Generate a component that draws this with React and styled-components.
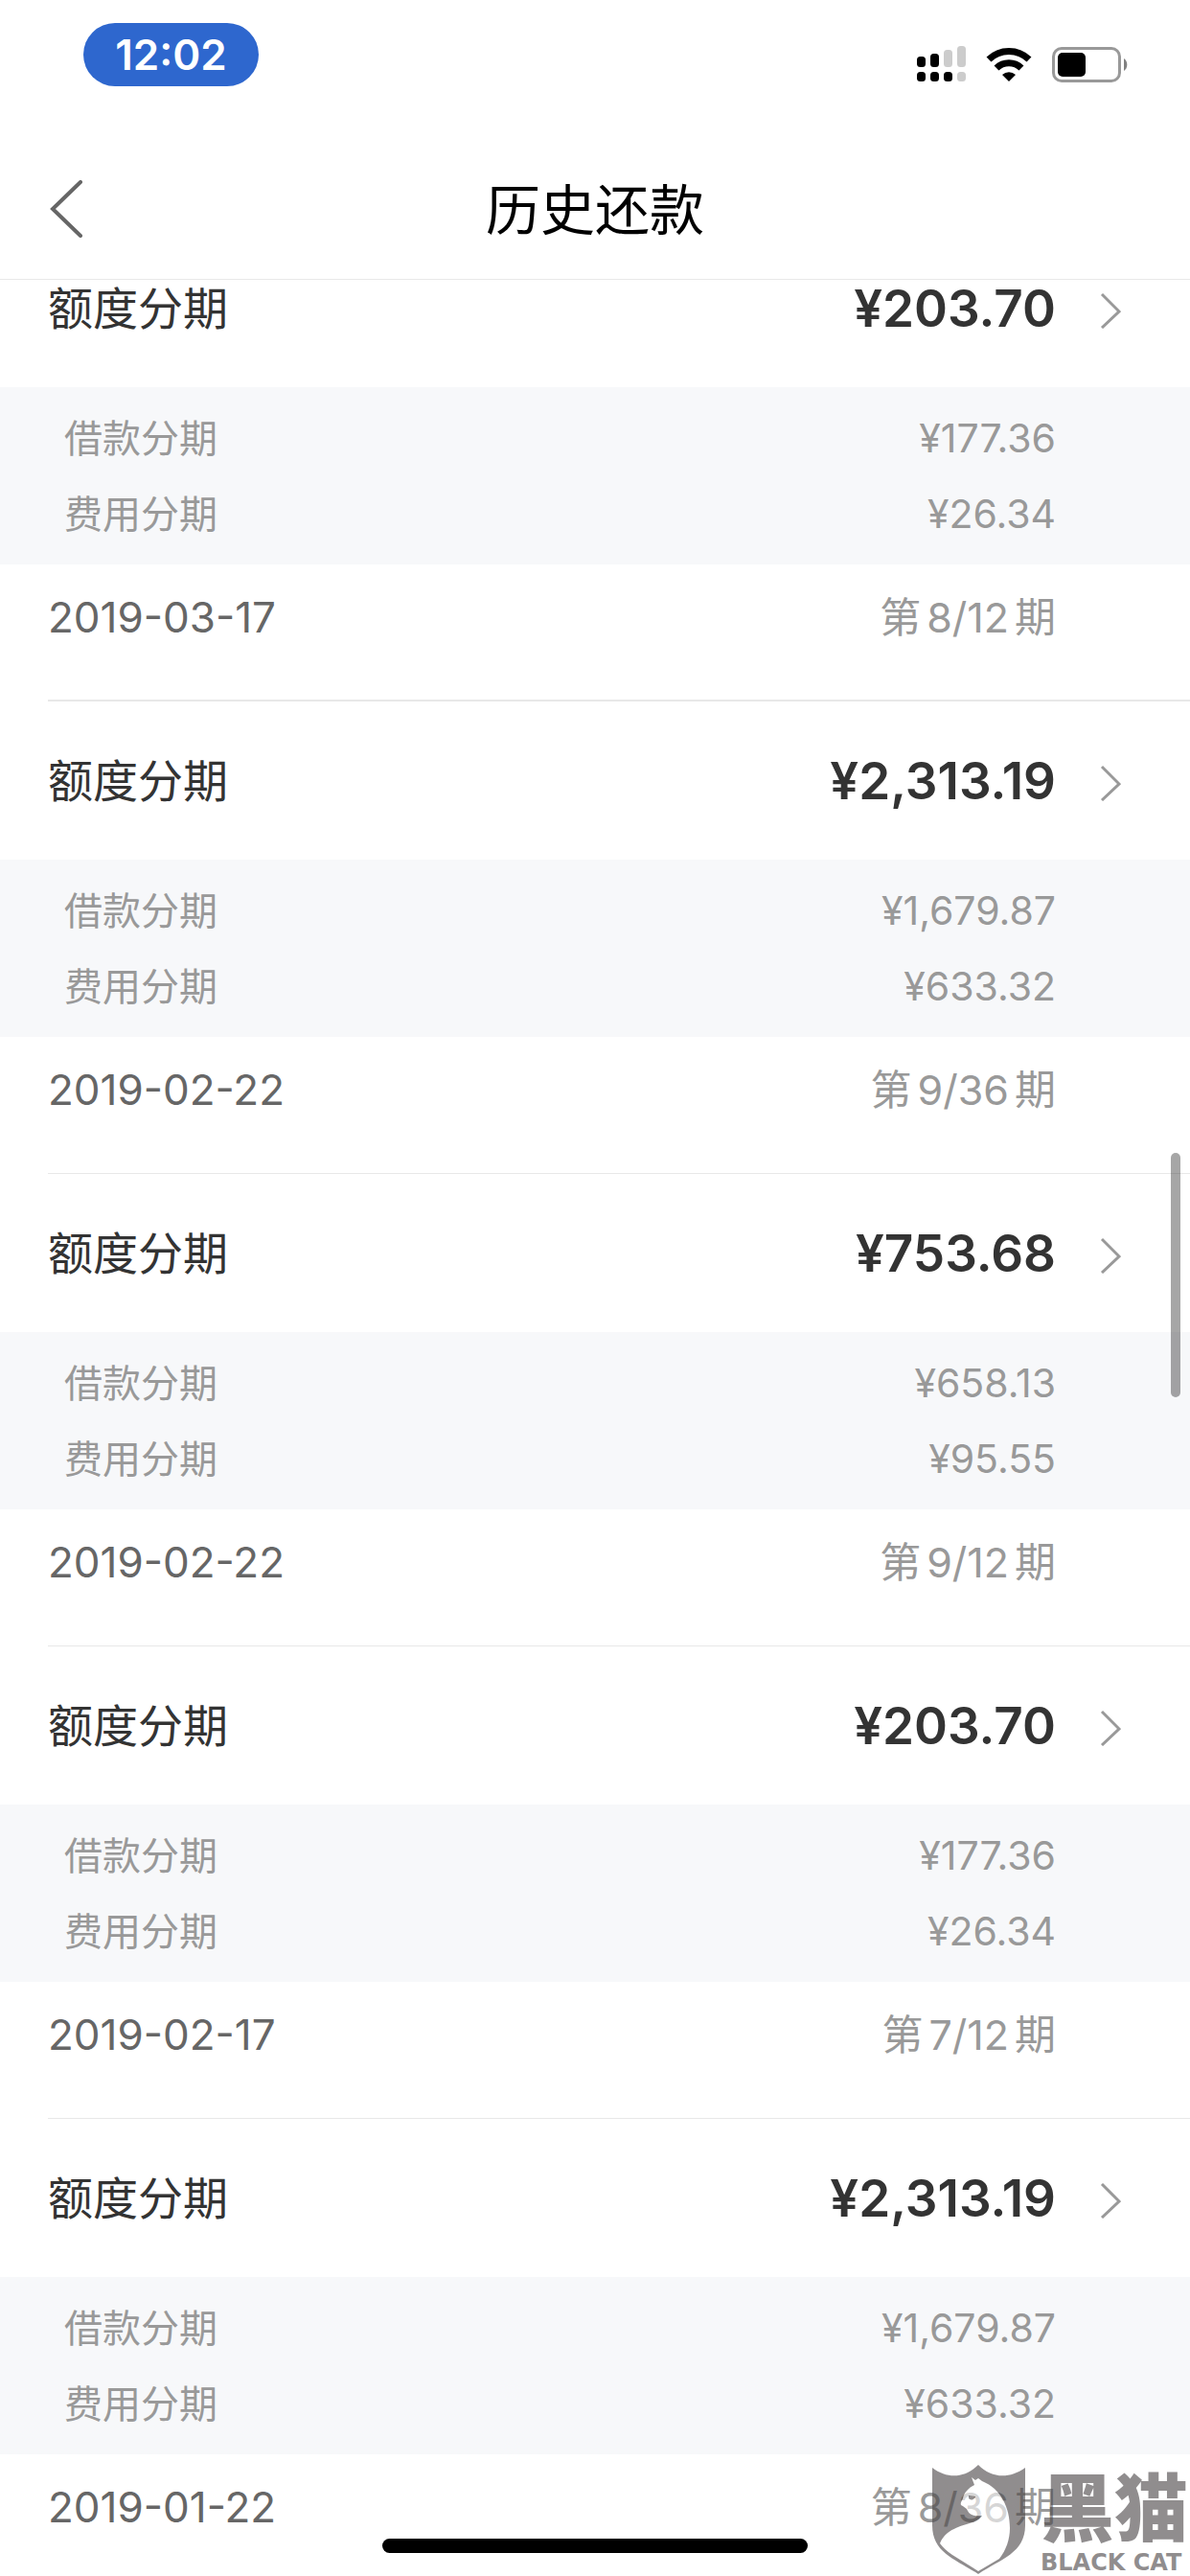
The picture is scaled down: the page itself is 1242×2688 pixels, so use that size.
import React from "react";
import styled, { createGlobalStyle } from "styled-components";

const GlobalStyle = createGlobalStyle`
  * { box-sizing: border-box; }
  body {
    margin: 0;
    background: #fff;
    color: #333;
    font-family: Inter, "Noto Sans CJK SC", sans-serif;
  }
`;

const Screen = styled.div`
  position: relative;
  display: flex;
  flex-direction: column;
  height: 100vh;
  overflow: hidden;
`;

const TopBar = styled.header`
  flex: none;
  position: relative;
  z-index: 1;
  background: #fff;
  border-bottom: 1px solid #e8e8e8;
`;

const StatusBar = styled.div`
  display: flex;
  justify-content: space-between;
  align-items: flex-start;
  height: 145px;
  padding: 24px 64px 0 87px;
`;

const Clock = styled.time`
  width: 183px;
  border-radius: 33px;
  background: #2e67ce;
  color: #fff;
  font-size: 44px;
  font-weight: 600;
  line-height: 66px;
  text-align: center;
`;

const StatusIcons = styled.div`
  display: flex;
  gap: 21px;
  padding-top: 24px;

  svg { display: block; }
`;

const NavBar = styled.nav`
  display: grid;
  grid-template-columns: 140px 1fr 140px;
  align-items: center;
  height: 146px;
`;

const BackButton = styled.button`
  display: flex;
  align-items: center;
  height: 100%;
  padding: 0 0 0 52px;
  border: 0;
  background: none;
`;

const Title = styled.h1`
  margin: 0;
  padding-top: 3px;
  color: #000;
  font-size: 57px;
  font-weight: 400;
  line-height: 80px;
  text-align: center;
`;

const Scroller = styled.main`
  flex: 1;
  min-height: 0;
  overflow: hidden;
`;

/* The list is scrolled part of the way through its first row. */
const RecordList = styled.ul`
  margin: -53px 0 0;
  padding: 0;
  list-style: none;
`;

const Summary = styled.a`
  display: flex;
  align-items: center;
  height: 165px;
  padding: 0 72px 0 50px;
  color: #333;
  text-decoration: none;
`;

const Label = styled.span`
  flex: 1;
  font-size: 47px;
  line-height: 60px;
`;

const Amount = styled.strong`
  margin-right: 46px;
  font-size: 53px;
  font-weight: 600;
  line-height: 60px;
`;

const Details = styled.dl`
  margin: 0;
  padding: 14px 140px 13px 67px;
  background: #f7f8fa;
  color: #999;
  font-size: 41px;
  line-height: 79px;
`;

const DetailRow = styled.div`
  display: flex;
  justify-content: space-between;

  dt { font-size: 40px; }
  dd { margin: 0; }
`;

const Footer = styled.div`
  display: flex;
  justify-content: space-between;
  height: 143px;
  margin-left: 50px;
  padding: 25px 140px 0 0;
  border-bottom: 1px solid #e8e8e8;
  color: #999;
  line-height: 60px;
`;

const Record = styled.li`
  display: block;

  &:first-child ${Footer} { border-bottom-width: 2px; }
`;

const PaidOn = styled.time`
  color: #666;
  font-size: 44px;
`;

const Period = styled.span`
  display: flex;
  gap: 6px;
  font-size: 43px;
`;

const ScrollThumb = styled.div`
  position: absolute;
  z-index: 2;
  top: 1203px;
  right: 10px;
  width: 10px;
  height: 255px;
  border-radius: 5px;
  background: rgba(0, 0, 0, 0.35);
`;

const HomeIndicator = styled.div`
  position: absolute;
  z-index: 2;
  bottom: 24px;
  left: 50%;
  width: 444px;
  height: 15px;
  margin-left: -222px;
  border-radius: 8px;
  background: #000;
`;

const Watermark = styled.div`
  position: absolute;
  z-index: 3;
  right: 2px;
  bottom: 0;
  display: flex;
  gap: 16px;
  opacity: 0.6;
  color: #484344;

  svg { display: block; }
`;

const Brand = styled.div`
  display: flex;
  flex-direction: column;
  gap: 8px;
  width: 154px;
  padding-top: 2px;
  white-space: nowrap;
`;

const BrandName = styled.span`
  font-family: "Noto Sans CJK SC", sans-serif;
  font-size: 77px;
  font-weight: 900;
  line-height: 78px;
`;

const BrandLatin = styled.span`
  font-family: "DejaVu Sans", sans-serif;
  font-size: 24px;
  font-weight: 700;
  line-height: 28px;
`;

const records = [
  { total: "203.70", loan: "177.36", fee: "26.34", date: "2019-03-17", period: "8/12" },
  { total: "2,313.19", loan: "1,679.87", fee: "633.32", date: "2019-02-22", period: "9/36" },
  { total: "753.68", loan: "658.13", fee: "95.55", date: "2019-02-22", period: "9/12" },
  { total: "203.70", loan: "177.36", fee: "26.34", date: "2019-02-17", period: "7/12" },
  { total: "2,313.19", loan: "1,679.87", fee: "633.32", date: "2019-01-22", period: "8/36" },
];

function SignalIcon() {
  return (
    <svg width="51" height="38" viewBox="0 0 51 38" aria-hidden="true">
      <rect x="0" y="11" width="9" height="11" rx="3.5" />
      <rect x="14" y="8" width="9" height="14" rx="3.5" />
      <rect x="28" y="4" width="9" height="18" rx="3.5" fill="#ccc" />
      <rect x="42" y="0" width="9" height="22" rx="3.5" fill="#ccc" />
      <rect x="0" y="27" width="9" height="10" rx="3.5" />
      <rect x="14" y="27" width="9" height="10" rx="3.5" />
      <rect x="28" y="27" width="9" height="10" rx="3.5" />
      <rect x="42" y="27" width="9" height="10" rx="3.5" fill="#ccc" />
    </svg>
  );
}

function WifiIcon() {
  return (
    <svg width="48" height="38" viewBox="0 0 48 38" aria-hidden="true">
      <g fill="none" stroke="#000" strokeWidth="7">
        <path d="M3 14 A30 30 0 0 1 45 14" />
        <path d="M11 23 A18.500 18.500 0 0 1 37 23" />
      </g>
      <path d="M24 37 L17 30 A10.500 10.500 0 0 1 31 30 Z" />
    </svg>
  );
}

function BatteryIcon() {
  return (
    <svg width="80" height="38" viewBox="0 0 80 38" aria-hidden="true">
      <rect x="1.500" y="2.500" width="69" height="34" rx="8.500" fill="none" stroke="#999" strokeWidth="3" />
      <rect x="6" y="7" width="29" height="25" rx="5" />
      <path d="M75 13 A8 8 0 0 1 75 26 Z" fill="#808080" />
    </svg>
  );
}

function BackIcon() {
  return (
    <svg width="36" height="60" viewBox="0 0 36 60" fill="none" stroke="#666" strokeWidth="4" strokeLinecap="round" aria-hidden="true">
      <path d="M32 2 L3 30 L32 58" />
    </svg>
  );
}

function ChevronIcon() {
  return (
    <svg width="22" height="42" viewBox="0 0 22 42" fill="none" stroke="#999" strokeWidth="3" aria-hidden="true">
      <path d="M2 6 L20 24 L2 41" />
    </svg>
  );
}

function ShieldCat() {
  return (
    <svg width="97" height="116" viewBox="0 0 97 116" aria-hidden="true">
      <path
        fill="#484344"
        d="M0 3 C16 15 34 14 48 0 C62 14 80 15 97 3 V63 C97 92 72 98 48 114 C24 98 0 92 0 63 Z"
      />
      <path
        fill="#fff"
        d="M41 13 L45 16 L48 14 L52 17 C72 25 81 45 81 66 C81 78 77 89 70 98 L48 111 L21 94 C15 90 11 86 8 82 C14 67 30 64 42 60 C47 58 50 56 52 53 C46 54 39 53 37 48 C36 45 33 44 30 42 C29 39 31 38 32 35 C33 29 38 24 44 21 Z"
      />
      <path fill="#484344" d="M38 32 L45 33 A4 4 0 0 1 38 35 Z" />
    </svg>
  );
}

export default function App() {
  return (
    <>
      <GlobalStyle />
      <Screen>
        <TopBar>
          <StatusBar>
            <Clock>12:02</Clock>
            <StatusIcons>
              <SignalIcon />
              <WifiIcon />
              <BatteryIcon />
            </StatusIcons>
          </StatusBar>
          <NavBar>
            <BackButton type="button" aria-label="返回">
              <BackIcon />
            </BackButton>
            <Title>历史还款</Title>
          </NavBar>
        </TopBar>

        <Scroller>
          <RecordList>
            {records.map((record, index) => (
              <Record key={index}>
                <Summary href="#">
                  <Label>额度分期</Label>
                  <Amount>¥{record.total}</Amount>
                  <ChevronIcon />
                </Summary>
                <Details>
                  <DetailRow>
                    <dt>借款分期</dt>
                    <dd>¥{record.loan}</dd>
                  </DetailRow>
                  <DetailRow>
                    <dt>费用分期</dt>
                    <dd>¥{record.fee}</dd>
                  </DetailRow>
                </Details>
                <Footer>
                  <PaidOn dateTime={record.date}>{record.date}</PaidOn>
                  <Period>
                    <span>第</span>
                    <span>{record.period}</span>
                    <span>期</span>
                  </Period>
                </Footer>
              </Record>
            ))}
          </RecordList>
        </Scroller>

        <ScrollThumb />
        <HomeIndicator />
        <Watermark>
          <ShieldCat />
          <Brand>
            <BrandName>黑猫</BrandName>
            <BrandLatin>BLACK CAT</BrandLatin>
          </Brand>
        </Watermark>
      </Screen>
    </>
  );
}
